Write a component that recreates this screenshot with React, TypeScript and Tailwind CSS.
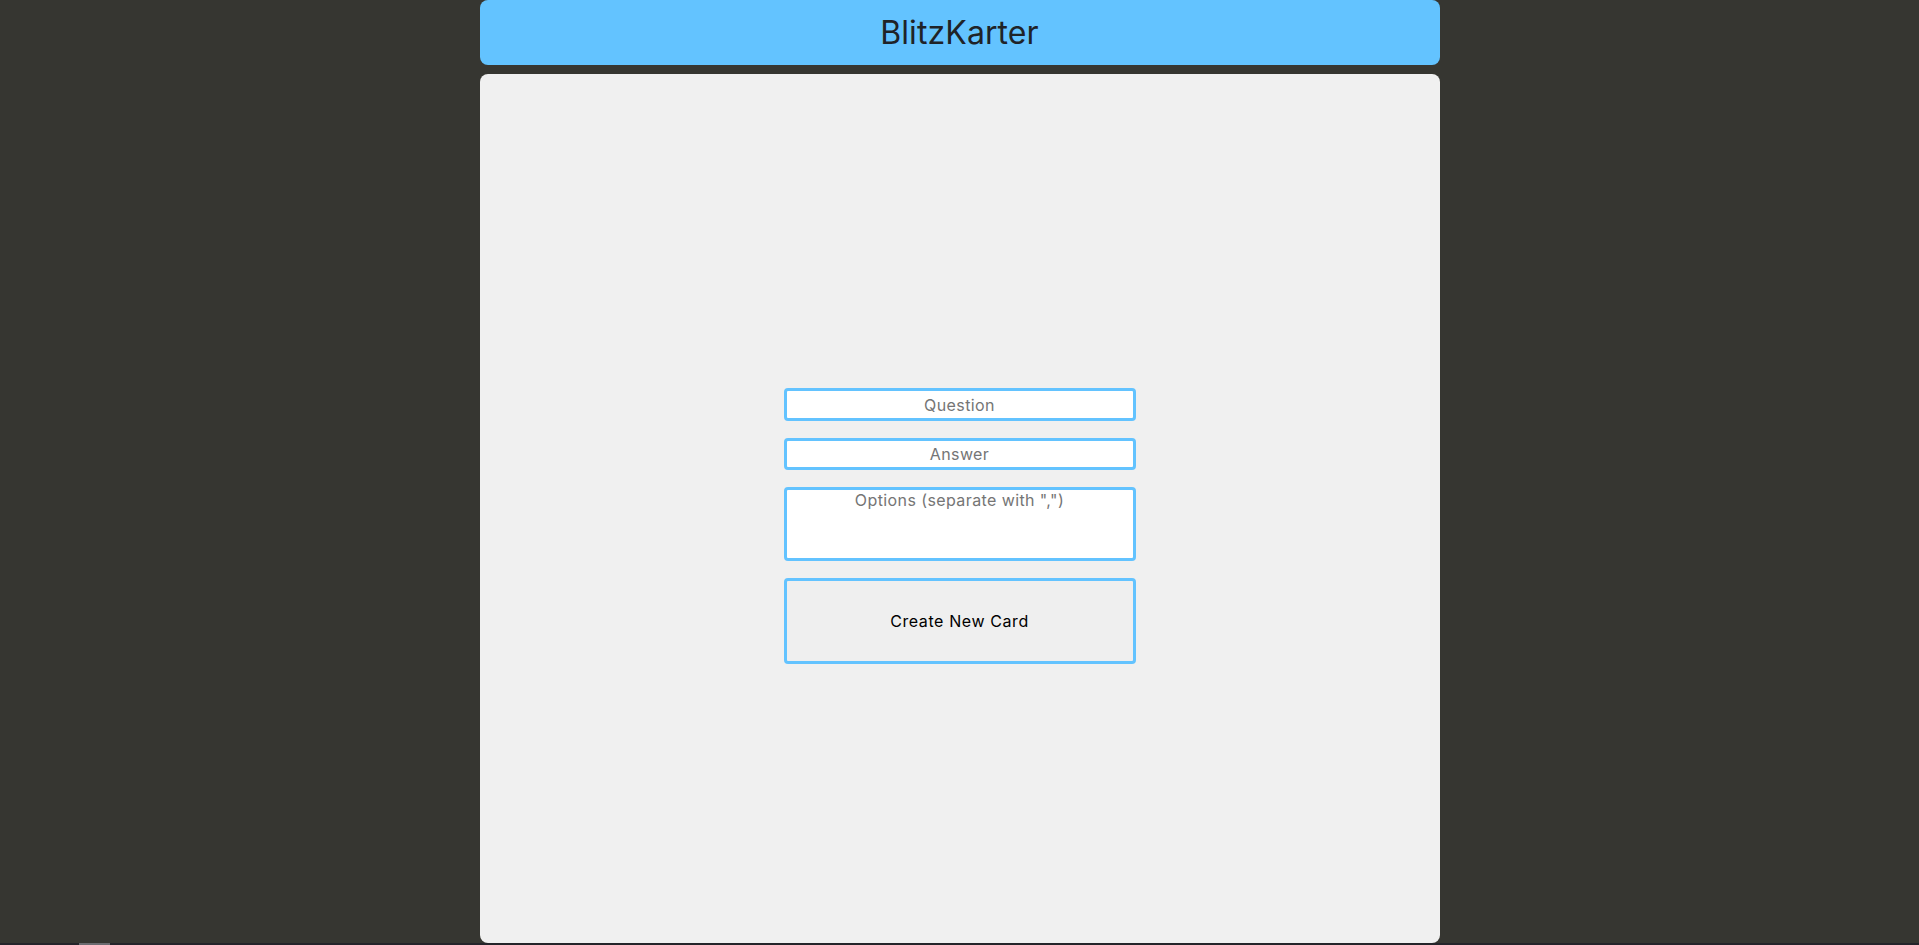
export default function App() {
  return (
    <div
      className="h-screen w-full overflow-hidden bg-[#363631] flex flex-col"
      style={{ fontFamily: "Inter, 'Noto Sans', sans-serif" }}
    >
      <div className="w-[960px] mx-auto flex flex-col flex-1 min-h-0">
        <header className="h-[65px] shrink-0 rounded-lg bg-[#63c3ff] flex items-center justify-center">
          <h1 className="text-[32px] font-normal text-[#1f2328] leading-none tracking-[0.1px]">BlitzKarter</h1>
        </header>

        <main className="mt-[9px] flex-1 min-h-0 rounded-lg bg-[#f0f0f0] flex items-center justify-center pt-[35px]">
          <form className="w-[352px] flex flex-col gap-[17px]" onSubmit={(e) => e.preventDefault()}>
            <input
              type="text"
              placeholder="Question"
              className="h-[33px] w-full bg-white border-[3px] border-[#63c3ff] rounded-[4px] text-center text-[16px] tracking-[0.4px] text-black placeholder:text-[#757575] outline-none"
            />
            <input
              type="text"
              placeholder="Answer"
              className="h-[32px] w-full bg-white border-[3px] border-[#63c3ff] rounded-[4px] text-center text-[16px] tracking-[0.4px] text-black placeholder:text-[#757575] outline-none"
            />
            <textarea
              placeholder='Options (separate with ",")'
              className="h-[74px] w-full bg-white border-[3px] border-[#63c3ff] rounded-[4px] text-center text-[16px] tracking-[0.4px] text-black placeholder:text-[#757575] outline-none resize-none leading-[20px]"
            />
            <button
              type="submit"
              className="h-[86px] w-full bg-[#efefef] border-[3px] border-[#63c3ff] rounded-[4px] text-[16px] tracking-[0.6px] text-black"
            >
              Create New Card
            </button>
          </form>
        </main>
      </div>
      <div className="h-[2px] shrink-0 bg-[#24242a] relative">
        <div className="absolute left-[79px] top-0 h-[2px] w-[31px] bg-[#6b6b70]" />
      </div>
    </div>
  );
}
